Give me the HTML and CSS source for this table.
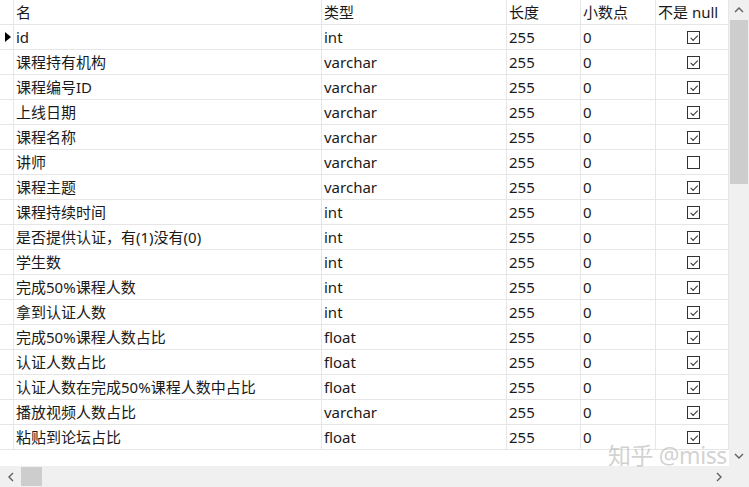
FILE: index.html
```html
<!DOCTYPE html>
<html lang="zh">
<head>
<meta charset="utf-8">
<link rel="stylesheet" href="styles.css">
</head>
<body>
<div class="window">
  <div class="main">
    <div class="grid">
      <div class="row head">
        <div class="c g"></div><div class="c">名</div><div class="c">类型</div><div class="c">长度</div><div class="c">小数点</div><div class="c">不是 null</div>
      </div>
      <div class="row"><div class="c g"><span class="tri"></span></div><div class="c">id</div><div class="c">int</div><div class="c">255</div><div class="c">0</div><div class="c ck"><span class="box on"></span></div></div>
      <div class="row"><div class="c g"></div><div class="c">课程持有机构</div><div class="c">varchar</div><div class="c">255</div><div class="c">0</div><div class="c ck"><span class="box on"></span></div></div>
      <div class="row"><div class="c g"></div><div class="c">课程编号ID</div><div class="c">varchar</div><div class="c">255</div><div class="c">0</div><div class="c ck"><span class="box on"></span></div></div>
      <div class="row"><div class="c g"></div><div class="c">上线日期</div><div class="c">varchar</div><div class="c">255</div><div class="c">0</div><div class="c ck"><span class="box on"></span></div></div>
      <div class="row"><div class="c g"></div><div class="c">课程名称</div><div class="c">varchar</div><div class="c">255</div><div class="c">0</div><div class="c ck"><span class="box on"></span></div></div>
      <div class="row"><div class="c g"></div><div class="c">讲师</div><div class="c">varchar</div><div class="c">255</div><div class="c">0</div><div class="c ck"><span class="box"></span></div></div>
      <div class="row"><div class="c g"></div><div class="c">课程主题</div><div class="c">varchar</div><div class="c">255</div><div class="c">0</div><div class="c ck"><span class="box on"></span></div></div>
      <div class="row"><div class="c g"></div><div class="c">课程持续时间</div><div class="c">int</div><div class="c">255</div><div class="c">0</div><div class="c ck"><span class="box on"></span></div></div>
      <div class="row"><div class="c g"></div><div class="c">是否提供认证，有(1)没有(0)</div><div class="c">int</div><div class="c">255</div><div class="c">0</div><div class="c ck"><span class="box on"></span></div></div>
      <div class="row"><div class="c g"></div><div class="c">学生数</div><div class="c">int</div><div class="c">255</div><div class="c">0</div><div class="c ck"><span class="box on"></span></div></div>
      <div class="row"><div class="c g"></div><div class="c">完成50%课程人数</div><div class="c">int</div><div class="c">255</div><div class="c">0</div><div class="c ck"><span class="box on"></span></div></div>
      <div class="row"><div class="c g"></div><div class="c">拿到认证人数</div><div class="c">int</div><div class="c">255</div><div class="c">0</div><div class="c ck"><span class="box on"></span></div></div>
      <div class="row"><div class="c g"></div><div class="c">完成50%课程人数占比</div><div class="c">float</div><div class="c">255</div><div class="c">0</div><div class="c ck"><span class="box on"></span></div></div>
      <div class="row"><div class="c g"></div><div class="c">认证人数占比</div><div class="c">float</div><div class="c">255</div><div class="c">0</div><div class="c ck"><span class="box on"></span></div></div>
      <div class="row"><div class="c g"></div><div class="c">认证人数在完成50%课程人数中占比</div><div class="c">float</div><div class="c">255</div><div class="c">0</div><div class="c ck"><span class="box on"></span></div></div>
      <div class="row"><div class="c g"></div><div class="c">播放视频人数占比</div><div class="c">varchar</div><div class="c">255</div><div class="c">0</div><div class="c ck"><span class="box on"></span></div></div>
      <div class="row"><div class="c g"></div><div class="c">粘贴到论坛占比</div><div class="c">float</div><div class="c">255</div><div class="c">0</div><div class="c ck"><span class="box on"></span></div></div>
    </div>
    <div class="vscroll">
      <div class="arrow"><svg width="10" height="6" viewBox="0 0 10 6"><path d="M1 5 L5 1 L9 5" fill="none" stroke="#606060" stroke-width="1.4"/></svg></div>
      <div class="vthumb"></div>
      <div class="vtrack"></div>
      <div class="arrow"><svg width="10" height="6" viewBox="0 0 10 6"><path d="M1 1 L5 5 L9 1" fill="none" stroke="#606060" stroke-width="1.4"/></svg></div>
    </div>
  </div>
  <div class="hbar">
    <div class="harrow"><svg width="6" height="10" viewBox="0 0 6 10"><path d="M5 1 L1 5 L5 9" fill="none" stroke="#606060" stroke-width="1.4"/></svg></div>
    <div class="hthumb"></div>
    <div class="htrack"></div>
    <div class="harrow"><svg width="6" height="10" viewBox="0 0 6 10"><path d="M1 1 L5 5 L1 9" fill="none" stroke="#606060" stroke-width="1.4"/></svg></div>
    <div class="corner"></div>
  </div>
  <div class="mark">知乎 @miss</div>
</div>
</body>
</html>
```

FILE: styles.css
```css
html, body {
  margin: 0;
  padding: 0;
  background: #ffffff;
}
body {
  font-family: "Noto Sans", "Noto Sans CJK SC", sans-serif;
  font-size: 15px;
  color: #1a1a1a;
}
.window {
  position: relative;
  width: 749px;
  height: 487px;
  overflow: hidden;
  display: flex;
  flex-direction: column;
}
.main {
  display: flex;
  height: 466px;
}
.grid {
  width: 729px;
  display: flex;
  flex-direction: column;
}
.row {
  display: grid;
  grid-template-columns: 14px 308px 185px 74px 75px 73px;
  height: 25px;
}
.c {
  box-sizing: border-box;
  border-right: 1px solid #e6e6e6;
  border-bottom: 1px solid #e6e6e6;
  padding-left: 2px;
  display: flex;
  align-items: center;
  white-space: nowrap;
  line-height: 1;
}
.c.g {
  padding-left: 0;
  justify-content: center;
}
.tri {
  width: 0;
  height: 0;
  border-top: 5px solid transparent;
  border-bottom: 5px solid transparent;
  border-left: 6px solid #000;
  margin-left: 2px;
}
.ck {
  justify-content: center;
  padding-left: 0;
}
.box {
  box-sizing: border-box;
  width: 13px;
  height: 13px;
  border: 1px solid #333;
  background: #fff;
  position: relative;
  margin-left: 2px;
}
.box.on::after {
  content: "";
  position: absolute;
  left: 2px;
  top: 1px;
  width: 6px;
  height: 3px;
  border-left: 1.3px solid #333;
  border-bottom: 1.3px solid #333;
  transform: rotate(-45deg) translate(-1px, 2px);
}
.vscroll {
  width: 20px;
  background: #f0f0f0;
  display: flex;
  flex-direction: column;
}
.arrow {
  height: 20px;
  display: flex;
  align-items: center;
  justify-content: center;
  flex: none;
}
.vthumb {
  height: 164px;
  margin: 0 1px 0 1px;
  background: #cdcdcd;
  flex: none;
}
.vtrack {
  flex: 1;
}
.hbar {
  height: 21px;
  background: #f0f0f0;
  display: flex;
  align-items: stretch;
}
.harrow {
  width: 21px;
  display: flex;
  align-items: center;
  justify-content: center;
  flex: none;
}
.hthumb {
  width: 21px;
  margin: 1px 0;
  background: #cdcdcd;
  flex: none;
}
.htrack {
  flex: 1;
}
.corner {
  width: 20px;
  flex: none;
}
.mark {
  position: absolute;
  left: 608px;
  top: 441px;
  font-size: 23px;
  line-height: 28px;
  color: rgba(190, 190, 190, 0.7);
  font-family: "Noto Sans", "Noto Sans CJK SC", sans-serif;
  letter-spacing: -0.4px;
  white-space: nowrap;
}
```
